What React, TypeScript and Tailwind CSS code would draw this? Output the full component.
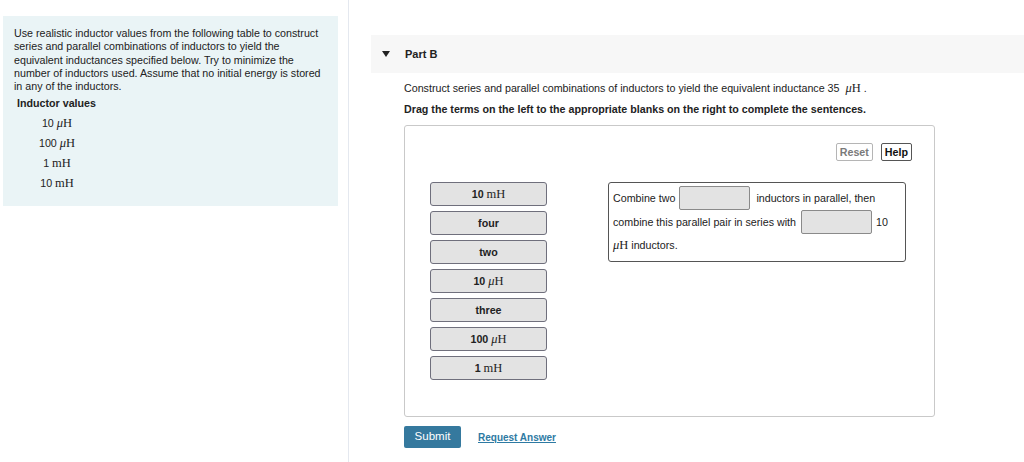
const sans = { fontFamily: '"Liberation Sans", Arial, sans-serif' };

function Mu({ children }: { children: React.ReactNode }) {
  return (
    <span className="font-['Liberation_Serif',serif] text-[12.5px] font-normal">
      {children}
    </span>
  );
}

function MicroH() {
  return (
    <Mu>
      <i>μ</i>H
    </Mu>
  );
}

const values = [
  <>10 <MicroH /></>,
  <>100 <MicroH /></>,
  <>1 <Mu>mH</Mu></>,
  <>10 <Mu>mH</Mu></>,
];

const terms = [
  <>10 <Mu>mH</Mu></>,
  <>four</>,
  <>two</>,
  <>10 <MicroH /></>,
  <>three</>,
  <>100 <MicroH /></>,
  <>1 <Mu>mH</Mu></>,
];

function Blank() {
  return (
    <span className="inline-block h-[24px] w-[71px] shrink-0 rounded-[2px] border border-[#8a8a8a] bg-[#e3e3e3] align-middle" />
  );
}

export default function App() {
  return (
    <div className="flex h-[462px] w-[1024px] bg-white text-[#222]" style={sans}>
      <div className="w-[348px] shrink-0 pl-[3px] pt-[16px]">
        <div className="h-[190px] w-[335px] bg-[#eaf4f6] pl-[11px] pr-[8px] pt-[11px]">
          <p className="text-[10.7px] leading-[13.3px]">
            Use realistic inductor values from the following table to construct series and
            parallel combinations of inductors to yield the equivalent inductances specified
            below. Try to minimize the number of inductors used. Assume that no initial energy is
            stored in any of the inductors.
          </p>
          <div className="mt-[3px] pl-[3px] text-[10.7px] font-bold leading-[14px]">
            Inductor values
          </div>
          <div className="mt-[4px] flex w-[64px] flex-col items-center pl-[22px]">
            {values.map((v, i) => (
              <div key={i} className="h-[19.7px] text-[10.7px] leading-[19px]">
                {v}
              </div>
            ))}
          </div>
        </div>
      </div>
      <div className="w-px shrink-0 bg-[#e4e8ef]" />
      <div className="flex-1 pl-[22px] pt-[35px]">
        <div className="flex h-[38px] items-center bg-[#f7f7f7] pl-[11px]">
          <svg width="8" height="6" viewBox="0 0 8 6" className="mr-[15px]">
            <path d="M0 0h8L4 6z" fill="#222" />
          </svg>
          <span className="text-[11px] font-bold">Part B</span>
        </div>
        <div className="pl-[33px]">
          <p className="mt-[7px] text-[10.7px] leading-[17px]">
            Construct series and parallel combinations of inductors to yield the equivalent
            inductance 35 &nbsp;<MicroH /> .
          </p>
          <p className="mt-[5px] text-[10.7px] font-bold leading-[14px]">
            Drag the terms on the left to the appropriate blanks on the right to complete the
            sentences.
          </p>
          <div className="mt-[9px] h-[292px] w-[531px] rounded-[3px] border border-[#c9c9c9] pt-[17px]">
            <div className="flex justify-end gap-[8px] pr-[22px]">
              <button className="h-[18px] rounded-[2px] border border-[#b5b5b5] px-[3px] text-[10.7px] font-bold leading-[16px] text-[#7a7a7a]">
                Reset
              </button>
              <button className="h-[18px] rounded-[2px] border border-[#555] px-[3px] text-[10.7px] font-bold leading-[16px] text-[#111]">
                Help
              </button>
            </div>
            <div className="mt-[21px] flex items-start pl-[25px]">
              <div className="flex flex-col gap-[5px]">
                {terms.map((t, i) => (
                  <div
                    key={i}
                    className="flex h-[24px] w-[117px] items-center justify-center rounded-[3px] border border-[#6f6f7c] bg-[#e3e3e3] text-[10.7px] font-bold"
                  >
                    <span>{t}</span>
                  </div>
                ))}
              </div>
              <div className="ml-[61px] h-[80px] w-[298px] rounded-[3px] border border-[#555] pl-[4px] pt-[3px] text-[10.7px] leading-[24px]">
                <div className="flex items-center">
                  <span className="mr-[4px]">Combine two</span>
                  <Blank />
                  <span className="ml-[6px] whitespace-nowrap">inductors in parallel, then</span>
                </div>
                <div className="flex items-center">
                  <span className="mr-[5px] whitespace-nowrap">
                    combine this parallel pair in series with
                  </span>
                  <Blank />
                  <span className="ml-[4px]">10</span>
                </div>
                <div className="leading-[22px]">
                  <MicroH /> inductors.
                </div>
              </div>
            </div>
          </div>
          <div className="mt-[9px] flex items-center">
            <button className="h-[22px] w-[57px] rounded-[2px] bg-[#35799e] text-[11.5px] text-white">
              Submit
            </button>
            <span className="ml-[17px] text-[10px] font-bold text-[#2e7aa3] underline">
              Request Answer
            </span>
          </div>
        </div>
      </div>
    </div>
  );
}
